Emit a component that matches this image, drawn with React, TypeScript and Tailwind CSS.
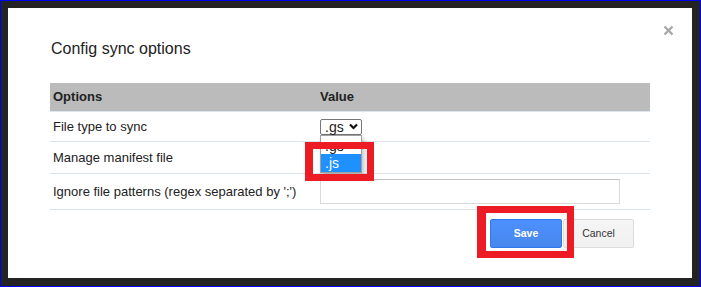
import React from "react";

const rowLine = "border-b border-[#dbe3ea]";

function Chevron() {
  return (
    <svg width="9" height="7" viewBox="0 0 9 7" className="ml-[5px]">
      <polyline points="1,1.5 4.5,5 8,1.5" fill="none" stroke="#111" strokeWidth="2.2" />
    </svg>
  );
}

export default function App() {
  return (
    <div className="w-[701px] h-[287px] border border-[#0000ee] bg-[#232323] pt-[7px] pl-[7px] pr-[8px] pb-[8px] font-['Liberation_Sans',Arial,sans-serif] text-[#222]">
      <div className="relative w-[684px] h-[270px] bg-white px-[42px] pt-[31px]">
        {/* close */}
        <div className="absolute right-[18px] top-[17px] w-[11px] h-[11px]">
          <svg width="11" height="11" viewBox="0 0 11 11">
            <path d="M1.5 1.5 L9.5 9.5 M9.5 1.5 L1.5 9.5" stroke="#a8a8a8" strokeWidth="2.4" />
          </svg>
        </div>

        <h2 className="text-[16px] leading-[20px] pl-[1px]">Config sync options</h2>

        <div className="mt-[24px] w-[600px] text-[13px]">
          <div className="flex items-center h-[29px] bg-[#bbbbbb] border-b border-[#dde6ee] font-bold">
            <div className="w-[270px] pl-[3px]">Options</div>
            <div>Value</div>
          </div>

          <div className={`flex items-center h-[30px] ${rowLine}`}>
            <div className="w-[270px] pl-[3px]">File type to sync</div>
            <div className="relative">
              <div className="flex items-center w-[42px] h-[16px] border border-[#767676] rounded-[2px] pl-[4px] leading-[14px] text-[14px]">
                .gs
                <Chevron />
              </div>
              <div className="absolute left-0 top-full w-[42px] h-[38px] bg-white border border-[#a0a0a0] shadow-[2px_3px_5px_rgba(0,0,0,0.25)] text-[14px]">
                <div className="h-[18px] pl-[4px] leading-[21px] overflow-hidden">.gs</div>
                <div className="h-[18px] pl-[4px] leading-[18px] bg-[#1e90ff] text-white">.js</div>
              </div>
            </div>
          </div>

          <div className={`flex items-center h-[32px] ${rowLine}`}>
            <div className="w-[270px] pl-[3px]">Manage manifest file</div>
          </div>

          <div className={`flex items-center h-[36px] ${rowLine}`}>
            <div className="w-[270px] pl-[3px]">Ignore file patterns (regex separated by ';')</div>
            <input
              type="text"
              className="w-[300px] h-[25px] border border-[#d9d9d9] border-t-[#c0c0c0] outline-none"
            />
          </div>
        </div>

        <div className="mt-[9px] w-[600px] flex justify-end pr-[16px] text-[10.5px]">
          <button className="w-[72px] h-[29px] rounded-[2px] border border-[#3079ed] bg-gradient-to-b from-[#4d90fe] to-[#4787ed] text-white font-bold">
            Save
          </button>
          <button className="ml-[1px] w-[71px] h-[29px] rounded-[2px] border border-[#dcdcdc] bg-gradient-to-b from-[#f5f5f5] to-[#f1f1f1] text-[#333]">
            Cancel
          </button>
        </div>

        {/* annotation boxes */}
        <div className="absolute left-[297px] top-[134px] w-[69px] h-[39px] border-[7px] border-l-[8px] border-[#ed1c24]" />
        <div className="absolute left-[469px] top-[198px] w-[97px] h-[52px] border-[7px] border-l-[9px] border-[#ed1c24]" />
      </div>
    </div>
  );
}
